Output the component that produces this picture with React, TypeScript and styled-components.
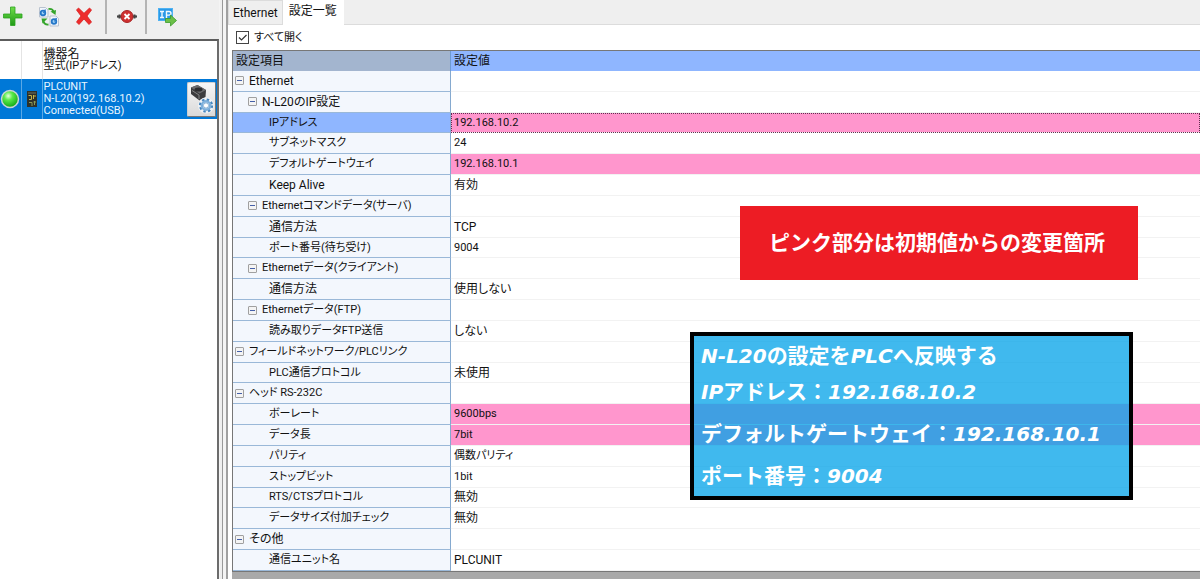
import React from 'react';
import styled, { createGlobalStyle } from 'styled-components';

const Global = createGlobalStyle`
  * { box-sizing: border-box; }
  body {
    margin: 0;
    background: #efefef;
    color: #111;
    font: 12px/16px "Roboto", "Noto Sans CJK JP", sans-serif;
    font-feature-settings: "palt";
  }
`;

const Shell = styled.div`
  display: flex;
  height: 100vh;
  min-height: 560px;
  overflow: hidden;
`;

const Sidebar = styled.aside`
  display: flex;
  flex-direction: column;
  flex: 0 0 219px;
`;

const Toolbar = styled.div`
  display: flex;
  height: 34px;
  margin-bottom: 5px;
`;

const ToolGroup = styled.div`
  display: flex;
  gap: 12px;
  padding: 4px 7px 0;
  border-right: 2px solid #b4b4b4;
  &:first-child { padding: 4px 9px 0 0; }
  &:last-child { border-right: 0; }
`;

const ToolButton = styled.button`
  width: 24px;
  height: 24px;
  padding: 0;
  border: 0;
  background: none;
  svg { display: block; }
`;

const DeviceArea = styled.div`
  flex: 1;
  background: #fff;
  border-top: 2px solid #5c5c5c;
  border-right: 2px solid #6c6c6c;
`;

const DeviceTable = styled.table`
  width: 100%;
  border-collapse: collapse;
  font-size: 11px;
  line-height: 12px;
  table-layout: fixed;
  th, td { padding: 0; text-align: left; font-weight: 400; }
  th { height: 38px; border-right: 1px solid #e4e4e4; }
  th:last-child { border-right: 0; padding-left: 1px; }
`;

const DeviceHeading = styled.span`
  display: block;
  font-size: 12px;
`;

const DeviceRow = styled.tr`
  height: 40px;
  background: #0078d7;
  color: #e8f6ff;
  td { border-right: 1px solid #5aa8e6; }
  td:last-child { border-right: 0; padding-left: 1px; }
  svg { display: block; margin: 0 auto; }
`;

const DeviceInfo = styled.div`
  display: flex;
  align-items: center;
  justify-content: space-between;
`;

const DeviceButton = styled.button`
  width: 29px;
  height: 35px;
  margin-right: 1px;
  padding: 0;
  border: 1px solid #cfcfcf;
  border-right-color: #777;
  border-bottom-color: #777;
  border-radius: 2px;
  background: linear-gradient(#f6f6f6, #dadada);
`;

const Splitter = styled.div`
  flex: 0 0 9px;
  border-left: 1px solid #f4f4f4;
  background: linear-gradient(90deg, #efefef 0 2px, #999 2px 3px, #f4f4f4 3px 6px, #a0a0a0 6px 8px);
`;

const Main = styled.main`
  position: relative;
  display: flex;
  flex: 1;
  flex-direction: column;
  min-width: 0;
  background: #fff;
`;

const Tabs = styled.div`
  display: flex;
  align-items: flex-end;
  height: 25px;
  background: #efefef;
  border-bottom: 1px solid #dcdcdc;
`;

const Tab = styled.button<{ $active?: boolean }>`
  height: ${(p) => (p.$active ? 25 : 24)}px;
  margin-bottom: ${(p) => (p.$active ? -1 : 0)}px;
  padding: ${(p) => (p.$active ? '0 7px 4px 6px' : '0 4px')};
  border: 1px solid #dcdcdc;
  border-width: ${(p) => (p.$active ? '0' : '1px 1px 0')};
  background: ${(p) => (p.$active ? '#fff' : '#efefef')};
  color: inherit;
  font: inherit;
`;

const OpenAll = styled.label`
  display: flex;
  align-items: center;
  gap: 5px;
  height: 25px;
  padding-left: 8px;
  font-size: 11px;
`;

const Check = styled.input`
  appearance: none;
  width: 13px;
  height: 13px;
  margin: 0;
  border: 1px solid #444;
  background: #fff;
  &:not(:checked) + svg { visibility: hidden; }
`;

const CheckWrap = styled.span`
  display: grid;
  > * { grid-area: 1 / 1; }
  svg { pointer-events: none; z-index: 1; }
`;

const Grid = styled.div`
  flex: 1;
  min-height: 0;
  margin-left: 4px;
  border-top: 1px solid #777;
  border-left: 1px solid #777;
`;

const SettingsTable = styled.table`
  width: 100%;
  height: 100%;
  border-collapse: separate;
  border-spacing: 0;
  table-layout: fixed;
  th, td {
    padding: 0 3px;
    text-align: left;
    font-weight: 400;
    white-space: nowrap;
    line-height: 16px;
  }
  thead th { height: 20px; background: #8fb6ff; }
  thead th:first-child { background: #a3b5cf; border-right: 1px solid #6f9bd0; }
`;

const NameCell = styled.th<{ $level: number; $selected?: boolean; $compact?: boolean }>`
  && { padding-left: ${(p) => [2, 15, 36][p.$level]}px; }
  border-right: 1px solid #85a9cf;
  border-bottom: 1px solid #9ab8d8;
  background: ${(p) => (p.$selected ? '#8fb6ff' : '#f3f7fd')};
  font-size: ${(p) => (p.$compact ? 11 : 12)}px;
`;

const ValueCell = styled.td<{ $changed?: boolean; $selected?: boolean; $compact?: boolean }>`
  border-bottom: 1px solid #f2f2f2;
  background: ${(p) => (p.$changed ? '#ff96cd' : '#fff')};
  font-size: ${(p) => (p.$compact ? 11 : 12)}px;
  outline: ${(p) => (p.$selected ? '1px dotted #603050' : 'none')};
  outline-offset: -1px;
`;

const NameInner = styled.span`
  display: flex;
  align-items: center;
  gap: 5px;
`;

const Toggle = styled.button`
  display: grid;
  place-items: center;
  width: 9px;
  height: 9px;
  padding: 0;
  border: 1px solid #a0a0a0;
  border-radius: 1px;
  background: #f4f4f4;
  &::before { content: ""; width: 5px; height: 1px; background: #4560a8; }
`;

const Footer = styled.div`
  height: 8px;
  margin-left: 4px;
  border-top: 1px solid #777;
  background: #a9a9a9;
`;

const Notice = styled.div`
  position: absolute;
  top: 206px;
  left: 512px;
  padding: 19px 33px 23px 29px;
  background: #ed1c24;
  color: #fff;
  font: bold 21px/32px "Noto Sans CJK JP", sans-serif;
  font-feature-settings: normal;
  white-space: nowrap;
`;

const Memo = styled.div`
  position: absolute;
  top: 332px;
  left: 462px;
  width: 443px;
  padding: 3px 7px 7px;
  border: 4px solid #000;
  background: rgba(0, 162, 232, 0.75);
  color: #fff;
  font: bold 21px/30px "Noto Sans CJK JP", sans-serif;
  font-feature-settings: normal;
  white-space: nowrap;
  p { margin: 0 0 12px; }
  p:first-child { margin-bottom: 6px; }
  p:last-child { margin-bottom: 0; }
  em { font: italic bold 20px/20px "DejaVu Sans", sans-serif; }
`;

type Row = { level: number; name: string; value?: string; changed?: boolean; selected?: boolean };

const rows: Row[] = [
  { level: 0, name: 'Ethernet' },
  { level: 1, name: 'N-L20のIP設定' },
  { level: 2, name: 'IPアドレス', value: '192.168.10.2', changed: true, selected: true },
  { level: 2, name: 'サブネットマスク', value: '24' },
  { level: 2, name: 'デフォルトゲートウェイ', value: '192.168.10.1', changed: true },
  { level: 2, name: 'Keep Alive', value: '有効' },
  { level: 1, name: 'Ethernetコマンドデータ(サーバ)' },
  { level: 2, name: '通信方法', value: 'TCP' },
  { level: 2, name: 'ポート番号(待ち受け)', value: '9004' },
  { level: 1, name: 'Ethernetデータ(クライアント)' },
  { level: 2, name: '通信方法', value: '使用しない' },
  { level: 1, name: 'Ethernetデータ(FTP)' },
  { level: 2, name: '読み取りデータFTP送信', value: 'しない' },
  { level: 0, name: 'フィールドネットワーク/PLCリンク' },
  { level: 2, name: 'PLC通信プロトコル', value: '未使用' },
  { level: 0, name: 'ヘッド RS-232C' },
  { level: 2, name: 'ボーレート', value: '9600bps', changed: true },
  { level: 2, name: 'データ長', value: '7bit', changed: true },
  { level: 2, name: 'パリティ', value: '偶数パリティ' },
  { level: 2, name: 'ストップビット', value: '1bit' },
  { level: 2, name: 'RTS/CTSプロトコル', value: '無効' },
  { level: 2, name: 'データサイズ付加チェック', value: '無効' },
  { level: 0, name: 'その他' },
  { level: 2, name: '通信ユニット名', value: 'PLCUNIT' },
];

// Katakana and numeric texts are set one size smaller than kanji.
const isCompact = (text = '') => /[ァ-ヶ]|^\d/.test(text);

const AddIcon = () => (
  <svg width="24" height="24" viewBox="0 0 24 24">
    <defs>
      <linearGradient id="add" x2="0" y2="1"><stop stopColor="#6fdc4a" /><stop offset="1" stopColor="#1f9a16" /></linearGradient>
    </defs>
    <path d="M10.500 3h4.500v7h7v4h-7v7.500h-4.500V14h-7v-4h7z" fill="url(#add)" stroke="#2ba31f" strokeWidth=".8" />
  </svg>
);

const SyncIcon = () => (
  <svg width="24" height="24" viewBox="0 0 24 24">
    <path d="M3.500 3.500h6l2.500 2.500v7H3.500z" fill="#f2f6fc" stroke="#b9c2cf" />
    <path d="M14 12h6l2.500 2.500V22H14z" fill="#f2f6fc" stroke="#b9c2cf" />
    <circle cx="7" cy="9" r="2.300" fill="#9fd0f5" stroke="#2577c8" strokeWidth="1.800" />
    <path d="M9.500 5.500 7.500 9" stroke="#2577c8" strokeWidth="1.400" />
    <circle cx="18" cy="17.500" r="2.300" fill="#9fd0f5" stroke="#2577c8" strokeWidth="1.800" />
    <path d="M20.500 14 18.500 17.500" stroke="#2577c8" strokeWidth="1.400" />
    <path d="M12.500 5q4.500-.5 5 3" fill="none" stroke="#35a52c" strokeWidth="1.800" />
    <path d="m14.500 7.500 5.500-1.500-.5 5z" fill="#35a52c" />
    <path d="M12.500 20.500q-4 .5-5-3" fill="none" stroke="#35a52c" strokeWidth="1.800" />
    <path d="M5.500 14.500h6l-5 5z" fill="#35a52c" />
  </svg>
);

const DeleteIcon = () => (
  <svg width="24" height="24" viewBox="0 0 24 24">
    <path d="M6.500 4 12 9.300 17.500 4 19.500 6 15 12l4.500 6-2.500 2.500L12 15l-5 5.500L4.500 18 9 12 4.500 6z" fill="#ee2c2c" stroke="#d81e1e" strokeWidth=".8" strokeLinejoin="round" />
  </svg>
);

const DisconnectIcon = () => (
  <svg width="24" height="24" viewBox="0 0 24 24">
    <path d="M3 12.500h20" stroke="#444" strokeWidth="2.200" />
    <path d="M5.500 10.500v4M20.500 10.500v4" stroke="#444" strokeWidth="2" />
    <circle cx="13" cy="12.500" r="6" fill="#cf3030" stroke="#a82626" />
    <path d="m10.500 10 5 5m0-5-5 5" stroke="#fff" strokeWidth="1.800" />
  </svg>
);

const IpIcon = () => (
  <svg width="24" height="24" viewBox="0 0 24 24">
    <rect x="4.500" y="4.500" width="14" height="12" fill="#2b9ae8" stroke="#4fb2f2" />
    <path d="M6 7.500h4M8 7.500v6M6 13.500h4M12.500 14V7.500H15q2 0 2 1.800T15 11.100h-2.500" fill="none" stroke="#f2faff" strokeWidth="1.400" />
    <path d="M11.500 14.500h5V11l6 5.500-6 5.500v-3.500h-5z" fill="#6cc048" stroke="#3b9a2a" strokeWidth=".8" />
  </svg>
);

const LedIcon = () => (
  <svg width="20" height="20" viewBox="0 0 20 20">
    <defs>
      <radialGradient id="led" cx=".4" cy=".32" r=".7"><stop stopColor="#e6ffe0" /><stop offset=".35" stopColor="#5cea4c" /><stop offset="1" stopColor="#0ea512" /></radialGradient>
    </defs>
    <circle cx="10" cy="10" r="8.500" fill="url(#led)" stroke="#c9d4d8" strokeWidth="1.500" />
  </svg>
);

const UnitIcon = () => (
  <svg width="12" height="18" viewBox="0 0 12 18">
    <rect x="1" y="1" width="10" height="16" fill="#2f3129" />
    <path d="M2 3h8" stroke="#6d7062" />
    <path d="M2.500 5.500h3v4M7.500 5v4M3 9.500h2.500M7.500 6h2.500" stroke="#c4b34a" fill="none" />
    <path d="M3 12.500h3V16M8.500 11v4M7.500 12h2.500" stroke="#8a9a55" fill="none" />
  </svg>
);

const ReaderIcon = () => (
  <svg width="27" height="33" viewBox="0 0 27 33">
    <path d="M3 4.500 9.500 2l8.500 5-.5 7-6 3.500L3 11z" fill="#3c3c3e" />
    <path d="M3 4.500 9.500 2 18 7l-6.500 3.500z" fill="#6b6b6d" />
    <ellipse cx="10.500" cy="6.500" rx="4" ry="2" fill="#2c2c2e" />
    <path d="M4 7.500 11 12v4" stroke="#858585" fill="none" />
    <circle cx="18" cy="22.500" r="8" fill="#eef2f6" />
    <circle cx="18" cy="22.500" r="5.800" fill="none" stroke="#4685bd" strokeWidth="2.600" strokeDasharray="2.300 2.255" />
    <circle cx="18" cy="22.500" r="4.200" fill="#fff" stroke="#7db0dc" strokeWidth="2.400" />
    <circle cx="18" cy="22.500" r="2.600" fill="#fff" stroke="#4a86bb" strokeWidth=".6" />
  </svg>
);

export default function App() {
  return (
    <Shell>
      <Global />
      <Sidebar>
        <Toolbar>
          <ToolGroup>
            <ToolButton aria-label="追加"><AddIcon /></ToolButton>
            <ToolButton aria-label="更新"><SyncIcon /></ToolButton>
            <ToolButton aria-label="削除"><DeleteIcon /></ToolButton>
          </ToolGroup>
          <ToolGroup><ToolButton aria-label="切断"><DisconnectIcon /></ToolButton></ToolGroup>
          <ToolGroup><ToolButton aria-label="IP設定"><IpIcon /></ToolButton></ToolGroup>
        </Toolbar>
        <DeviceArea>
          <DeviceTable>
            <colgroup><col width="21" /><col width="21" /><col /></colgroup>
            <thead>
              <tr><th /><th /><th><DeviceHeading>機器名</DeviceHeading>型式(IPアドレス)</th></tr>
            </thead>
            <tbody>
              <DeviceRow>
                <td><LedIcon /></td>
                <td><UnitIcon /></td>
                <td>
                  <DeviceInfo>
                    <span>PLCUNIT<br />N-L20(192.168.10.2)<br />Connected(USB)</span>
                    <DeviceButton aria-label="機器設定"><ReaderIcon /></DeviceButton>
                  </DeviceInfo>
                </td>
              </DeviceRow>
            </tbody>
          </DeviceTable>
        </DeviceArea>
      </Sidebar>
      <Splitter />
      <Main>
        <Tabs role="tablist">
          <Tab role="tab">Ethernet</Tab>
          <Tab role="tab" $active aria-selected>設定一覧</Tab>
        </Tabs>
        <OpenAll>
          <CheckWrap>
            <Check type="checkbox" defaultChecked />
            <svg width="13" height="13" viewBox="0 0 13 13"><path d="m3 6.500 2.500 2.500L10.500 4" fill="none" stroke="#333" strokeWidth="1.200" /></svg>
          </CheckWrap>
          すべて開く
        </OpenAll>
        <Grid>
          <SettingsTable>
            <colgroup><col width="218" /><col /></colgroup>
            <thead><tr><th>設定項目</th><th>設定値</th></tr></thead>
            <tbody>
              {rows.map((r, i) => (
                <tr key={i}>
                  <NameCell scope="row" $level={r.level} $selected={r.selected} $compact={isCompact(r.name)}>
                    <NameInner>
                      {r.level < 2 && <Toggle aria-label="折りたたむ" />}
                      {r.name}
                    </NameInner>
                  </NameCell>
                  <ValueCell $changed={r.changed} $selected={r.selected} $compact={isCompact(r.value)}>{r.value}</ValueCell>
                </tr>
              ))}
            </tbody>
          </SettingsTable>
        </Grid>
        <Footer />
        <Notice>ピンク部分は初期値からの変更箇所</Notice>
        <Memo>
          <p><em>N-L20</em>の設定を<em>PLC</em>へ反映する</p>
          <p><em>IP</em>アドレス：<em>192.168.10.2</em></p>
          <p>デフォルトゲートウェイ：<em>192.168.10.1</em></p>
          <p>ポート番号：<em>9004</em></p>
        </Memo>
      </Main>
    </Shell>
  );
}
